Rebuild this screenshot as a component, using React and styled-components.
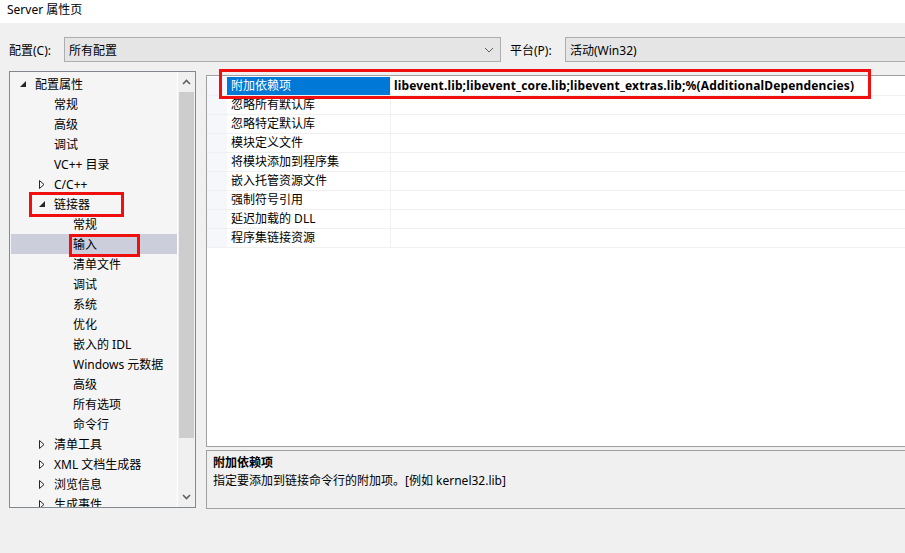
import styled, { createGlobalStyle } from "styled-components";

const GlobalStyle = createGlobalStyle`
  html, body {
    margin: 0;
    padding: 0;
    background: #f0f0f0;
  }
  body {
    font-family: "Noto Sans", "Noto Sans CJK SC", sans-serif;
    font-size: 12px;
    color: #000;
  }
`;

const treeItems = [
  { level: 0, label: "配置属性", toggle: "open" },
  { level: 1, label: "常规" },
  { level: 1, label: "高级" },
  { level: 1, label: "调试" },
  { level: 1, label: "VC++ 目录" },
  { level: 1, label: "C/C++", toggle: "closed" },
  { level: 1, label: "链接器", toggle: "open" },
  { level: 2, label: "常规" },
  { level: 2, label: "输入", selected: true },
  { level: 2, label: "清单文件" },
  { level: 2, label: "调试" },
  { level: 2, label: "系统" },
  { level: 2, label: "优化" },
  { level: 2, label: "嵌入的 IDL" },
  { level: 2, label: "Windows 元数据" },
  { level: 2, label: "高级" },
  { level: 2, label: "所有选项" },
  { level: 2, label: "命令行" },
  { level: 1, label: "清单工具", toggle: "closed" },
  { level: 1, label: "XML 文档生成器", toggle: "closed" },
  { level: 1, label: "浏览信息", toggle: "closed" },
  { level: 1, label: "生成事件", toggle: "closed" },
];

const properties = [
  {
    name: "附加依赖项",
    value:
      "libevent.lib;libevent_core.lib;libevent_extras.lib;%(AdditionalDependencies)",
    selected: true,
  },
  { name: "忽略所有默认库" },
  { name: "忽略特定默认库" },
  { name: "模块定义文件" },
  { name: "将模块添加到程序集" },
  { name: "嵌入托管资源文件" },
  { name: "强制符号引用" },
  { name: "延迟加载的 DLL" },
  { name: "程序集链接资源" },
];

const Window = styled.div`
  position: relative;
  width: 905px;
  height: 553px;
  overflow: hidden;
  background: #f0f0f0;
`;

const TitleBar = styled.div`
  height: 23px;
  background: #fff;
  padding-left: 7px;
  line-height: 19px;
  font-size: 12px;
`;

const ConfigRow = styled.div`
  display: flex;
  align-items: center;
  height: 25px;
  margin-top: 14px;
  padding-left: 9px;
`;

const Label = styled.span`
  width: ${(p) => p.w}px;
  flex-shrink: 0;
`;

const Combo = styled.div`
  display: flex;
  align-items: center;
  justify-content: space-between;
  box-sizing: border-box;
  width: ${(p) => (p.w ? `${p.w}px` : "auto")};
  flex: ${(p) => (p.w ? "0 0 auto" : "1")};
  height: 25px;
  margin-right: ${(p) => p.mr || 0}px;
  padding: 0 6px 0 4px;
  border: 1px solid #adadad;
  border-right-width: ${(p) => (p.open ? 0 : 1)}px;
  background: #e5e5e5;
`;

const Main = styled.div`
  display: flex;
  margin-top: 9px;
  padding-left: 9px;
`;

const Tree = styled.div`
  display: flex;
  box-sizing: border-box;
  width: 187px;
  height: 437px;
  border: 1px solid #828790;
  background: #f5f5f5;
`;

const TreeList = styled.div`
  flex: 1;
  overflow: hidden;
  padding-top: 2px;
`;

const TreeRow = styled.div`
  display: flex;
  align-items: center;
  height: 20px;
  margin-left: 1px;
  padding-left: ${(p) => 9 + p.level * 19}px;
  background: ${(p) => (p.selected ? "#cccedb" : "transparent")};
`;

const Toggle = styled.span`
  display: inline-flex;
  width: 15px;
  justify-content: flex-start;
  align-items: center;
`;

const Scrollbar = styled.div`
  display: flex;
  flex-direction: column;
  width: 17px;
  background: #f0f0f0;
  border-left: 1px solid #fff;
`;

const ScrollArrow = styled.div`
  height: 20px;
  display: flex;
  align-items: center;
  justify-content: center;
`;

const ScrollThumb = styled.div`
  height: 346px;
  margin: 0 1px;
  background: #cdcdcd;
`;

const ScrollTrack = styled.div`
  flex: 1;
`;

const RightPane = styled.div`
  flex: 1;
  display: flex;
  flex-direction: column;
  margin-left: 10px;
  margin-top: 4px;
`;

const Grid = styled.div`
  box-sizing: border-box;
  height: 372px;
  border: 1px solid #a0a0a0;
  border-right: 0;
  background: #fff;
  padding-top: 1px;
`;

const PropRow = styled.div`
  display: flex;
  height: 19px;
  box-sizing: border-box;
  border-bottom: 1px solid #f0f0f0;
`;

const Gutter = styled.div`
  width: 20px;
  flex-shrink: 0;
  background: #f5f7fb;
`;

const PropName = styled.div`
  width: 164px;
  flex-shrink: 0;
  box-sizing: border-box;
  padding-left: 4px;
  line-height: 18px;
  border-right: 1px solid #f0f0f0;
  background: ${(p) => (p.selected ? "#0078d7" : "#fff")};
  color: ${(p) => (p.selected ? "#fff" : "#000")};
`;

const PropValue = styled.div`
  flex: 1;
  padding-left: 3px;
  line-height: 18px;
  font-weight: 700;
  letter-spacing: 0.15px;
  white-space: nowrap;
`;

const Description = styled.div`
  box-sizing: border-box;
  height: 59px;
  margin-top: 3px;
  padding: 3px 6px;
  border: 1px solid #a0a0a0;
  border-right: 0;
  background: #f0f0f0;
  line-height: 18px;
`;

const DescTitle = styled.div`
  font-weight: 700;
`;

const Annotation = styled.div`
  position: absolute;
  left: ${(p) => p.x}px;
  top: ${(p) => p.y}px;
  width: ${(p) => p.w}px;
  height: ${(p) => p.h}px;
  box-sizing: border-box;
  border: 3px solid #f00f0f;
  pointer-events: none;
`;

const Chevron = () => (
  <svg width="10" height="6" viewBox="0 0 10 6">
    <path d="M1 1 L5 5 L9 1" fill="none" stroke="#606060" strokeWidth="1" />
  </svg>
);

const TreeToggle = ({ kind }) => (
  <Toggle>
    {kind === "open" && (
      <svg width="6" height="6" viewBox="0 0 6 6">
        <path d="M6 0 L6 6 L0 6 Z" fill="#262626" />
      </svg>
    )}
    {kind === "closed" && (
      <svg width="6" height="9" viewBox="0 0 6 9">
        <path d="M0.5 0.5 L5 4.5 L0.5 8.5 Z" fill="none" stroke="#262626" strokeWidth="1" />
      </svg>
    )}
  </Toggle>
);

const ArrowIcon = ({ up }) => (
  <svg width="9" height="6" viewBox="0 0 9 6">
    <path
      d={up ? "M1 5 L4.5 1.5 L8 5" : "M1 1 L4.5 4.5 L8 1"}
      fill="none"
      stroke="#606060"
      strokeWidth="1.6"
    />
  </svg>
);

const App = () => {
  return (
    <Window>
      <GlobalStyle />
      <TitleBar>Server 属性页</TitleBar>
      <ConfigRow>
        <Label w={55}>配置(C):</Label>
        <Combo w={437} mr={9}>
          <span>所有配置</span>
          <Chevron />
        </Combo>
        <Label w={55}>平台(P):</Label>
        <Combo open>
          <span>活动(Win32)</span>
        </Combo>
      </ConfigRow>
      <Main>
        <Tree>
          <TreeList>
            {treeItems.map((item, i) => (
              <TreeRow key={i} level={item.level} selected={item.selected}>
                <TreeToggle kind={item.toggle} />
                <span>{item.label}</span>
              </TreeRow>
            ))}
          </TreeList>
          <Scrollbar>
            <ScrollArrow>
              <ArrowIcon up />
            </ScrollArrow>
            <ScrollThumb />
            <ScrollTrack />
            <ScrollArrow>
              <ArrowIcon />
            </ScrollArrow>
          </Scrollbar>
        </Tree>
        <RightPane>
          <Grid>
            {properties.map((prop) => (
              <PropRow key={prop.name}>
                <Gutter />
                <PropName selected={prop.selected}>{prop.name}</PropName>
                <PropValue>{prop.value}</PropValue>
              </PropRow>
            ))}
          </Grid>
          <Description>
            <DescTitle>附加依赖项</DescTitle>
            <div>指定要添加到链接命令行的附加项。[例如 kernel32.lib]</div>
          </Description>
        </RightPane>
      </Main>
      <Annotation x={219} y={69} w={652} h={30} />
      <Annotation x={29} y={192} w={95} h={25} />
      <Annotation x={69} y={234} w={71} h={23} />
    </Window>
  );
};

export default App;
